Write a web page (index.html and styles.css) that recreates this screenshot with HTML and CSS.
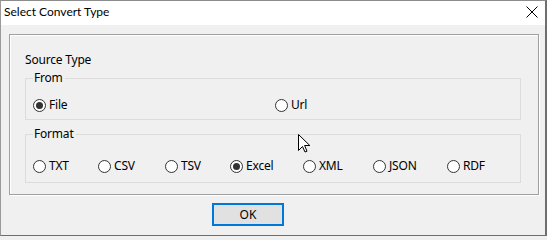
FILE: index.html
```html
<!DOCTYPE html>
<html>
<head>
<meta charset="utf-8">
<link rel="stylesheet" href="styles.css">
</head>
<body>
<div class="window">
  <div class="titlebar">
    <span class="title">Select Convert Type</span>
    <svg class="close" width="12" height="12" viewBox="0 0 12 12"><path d="M0.5 0.5 L11.5 11.5 M11.5 0.5 L0.5 11.5" stroke="#000" stroke-width="1" fill="none"/></svg>
  </div>
  <div class="client">
    <div class="panel">
      <div class="caption">Source Type</div>
      <fieldset class="group group-from">
        <legend>From</legend>
        <div class="row row-from">
          <label class="opt"><input type="radio" name="from" checked><span>File</span></label>
          <label class="opt"><input type="radio" name="from"><span>Url</span></label>
        </div>
      </fieldset>
      <fieldset class="group group-format">
        <legend>Format</legend>
        <div class="row row-format">
          <label class="opt"><input type="radio" name="fmt"><span>TXT</span></label>
          <label class="opt"><input type="radio" name="fmt"><span>CSV</span></label>
          <label class="opt"><input type="radio" name="fmt"><span>TSV</span></label>
          <label class="opt"><input type="radio" name="fmt" checked><span>Excel</span></label>
          <label class="opt"><input type="radio" name="fmt"><span>XML</span></label>
          <label class="opt"><input type="radio" name="fmt"><span>JSON</span></label>
          <label class="opt"><input type="radio" name="fmt"><span>RDF</span></label>
        </div>
      </fieldset>
    </div>
    <div class="buttons">
      <button class="ok">OK</button>
    </div>
  </div>
  <svg class="cursor" width="13" height="19" viewBox="0 0 13 19"><path d="M0.5 0.5 L0.5 16.5 L4.5 12.5 L7 18 L9 17.2 L6.6 11.5 L11.8 11.5 Z" fill="#fff" stroke="#000" stroke-width="1" stroke-linejoin="miter"/></svg>
</div>
</body>
</html>
```
FILE: styles.css
```css
* { box-sizing: border-box; }
html, body { margin: 0; padding: 0; }
body {
  width: 547px;
  height: 236px;
  overflow: hidden;
  background: #f0f0f0;
  font-family: "Noto Sans", "Open Sans", sans-serif;
  font-size: 12px;
  letter-spacing: -0.2px;
  color: #000;
}
.window {
  position: relative;
  width: 547px;
  height: 236px;
  background: #f0f0f0;
  border-top: 1px solid #8c8c8c;
  border-left: 1px solid #9a9a9a;
  border-right: 2px solid #6e6e6e;
  border-bottom: 1px solid #6e6e6e;
  display: flex;
  flex-direction: column;
}
.titlebar {
  height: 24px;
  background: #fff;
  display: flex;
  align-items: center;
  justify-content: space-between;
  padding: 0 7px 0 3px;
  flex: none;
}
.title {
  font-family: Lato, "Noto Sans", sans-serif;
  font-size: 12px;
  letter-spacing: 0;
  line-height: 16px;
  margin-top: -2px;
}
.close { display: block; margin-top: -3px; }
.client {
  flex: 1;
  padding: 9px 6px 0 8px;
  display: flex;
  flex-direction: column;
}
.panel {
  width: 530px;
  height: 161px;
  border: 1px solid #a0a0a0;
  box-shadow: inset 1px 1px 0 #fff, 1px 1px 0 #fff;
  padding: 17px 17px 0 15px;
  display: flex;
  flex-direction: column;
  flex: none;
}
.caption {
  line-height: 16px;
  height: 16px;
  margin-bottom: 2px;
}
.group {
  margin: 0;
  width: 496px;
  border: 1px solid #dcdcdc;
  padding: 0 0 0 7px;
  min-width: 0;
}
.group legend {
  padding: 0 2px 0 1px;
  line-height: 16px;
  margin-left: 0;
}
.group-from {
  height: 50px;
}
.group-format {
  margin-top: 6px;
  height: 57px;
}
.row {
  display: grid;
  align-items: center;
  height: 16px;
}
.row-from {
  margin-top: 11px;
  grid-template-columns: 242px auto;
}
.row-format {
  margin-top: 16px;
  grid-template-columns: 65px 67px 65px 73px 70px 74px auto;
}
.opt {
  display: flex;
  align-items: center;
  line-height: 16px;
  white-space: nowrap;
}
.opt input {
  -webkit-appearance: none;
  appearance: none;
  margin: 0 3px 0 0;
  width: 13px;
  height: 13px;
  border: 1px solid #333;
  border-radius: 50%;
  background: #fff;
  display: grid;
  place-content: center;
  flex: none;
}
.opt input:checked::before {
  content: "";
  width: 7px;
  height: 7px;
  border-radius: 50%;
  background: #333;
}
.buttons {
  padding-top: 8px;
  padding-left: 203px;
}
.ok {
  width: 72px;
  height: 23px;
  background: #e1e1e1;
  border: 2px solid #0078d7;
  font-family: inherit;
  font-size: 12px;
  letter-spacing: 0;
  color: #000;
  padding: 0;
  margin: 0;
  line-height: 16px;
}
.cursor {
  position: absolute;
  left: 297px;
  top: 133px;
}
```
